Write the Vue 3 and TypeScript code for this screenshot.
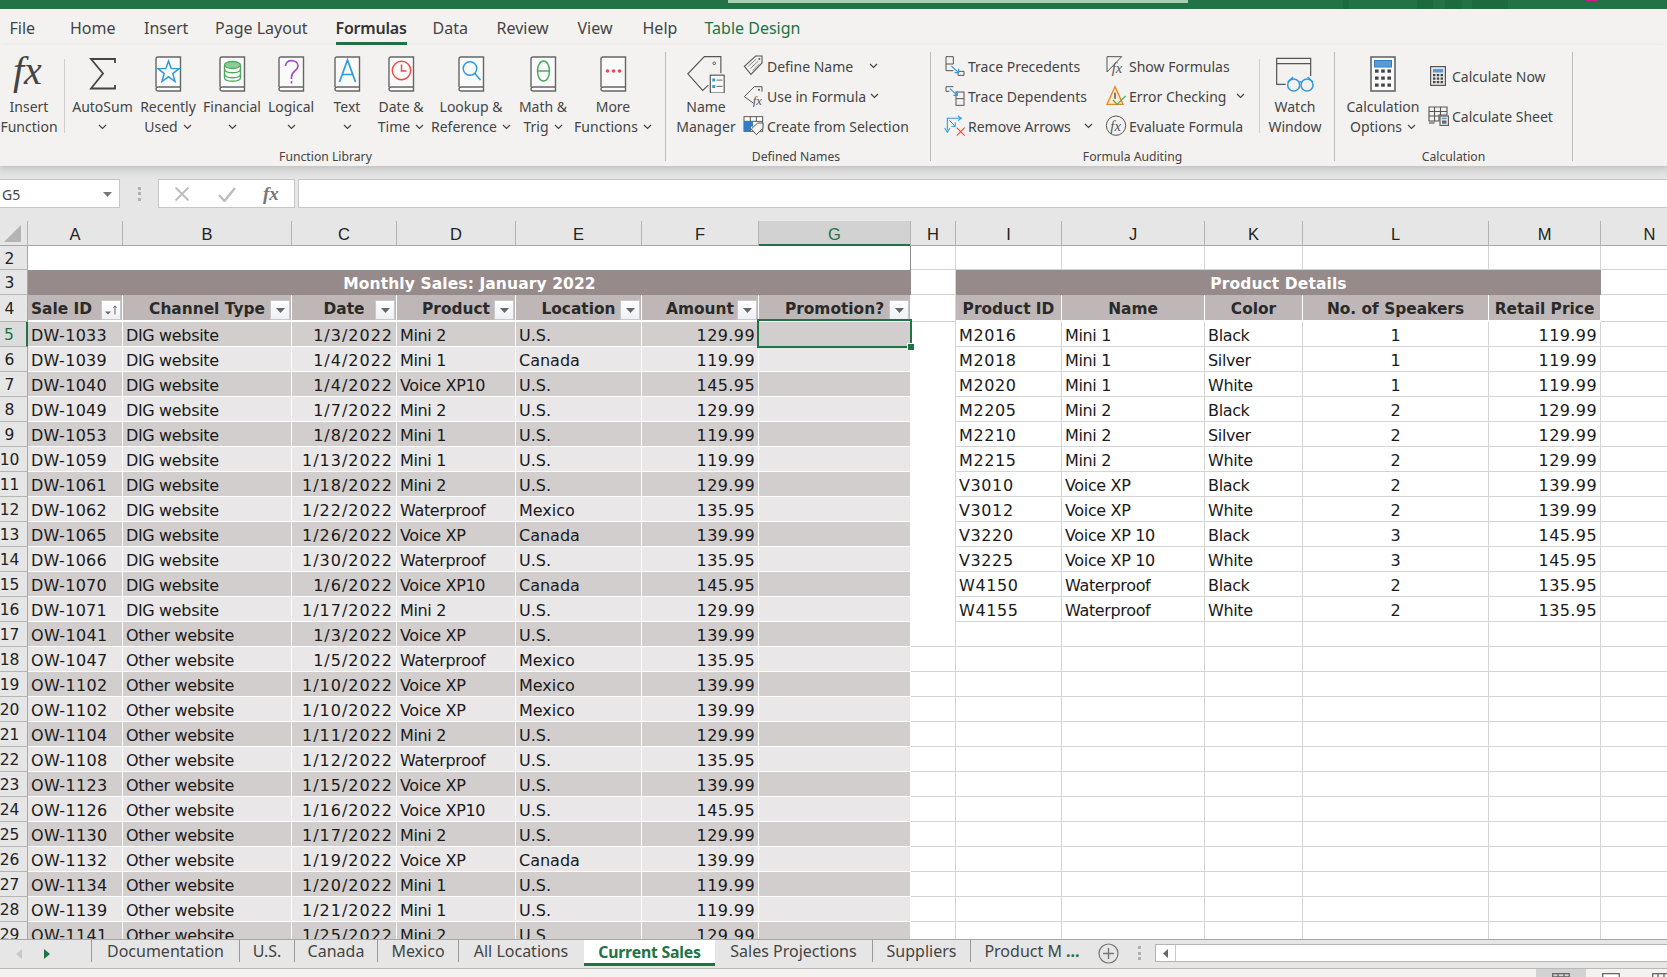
<script setup lang="ts">
interface Cell {
  text?: string
  cls: string
  filter?: boolean
  sorted?: boolean
  selected?: boolean
}
interface Row {
  n: number
  cls: string
  cells: Cell[]
}

const tabs = [
  { label: 'File', w: 60.5 },
  { label: 'Home', w: 74 },
  { label: 'Insert', w: 71 },
  { label: 'Page Layout', w: 120.5 },
  { label: 'Formulas', w: 97 },
  { label: 'Data', w: 64 },
  { label: 'Review', w: 81 },
  { label: 'View', w: 65 },
  { label: 'Help', w: 62 },
  { label: 'Table Design', w: 110 },
].map((t) => ({ ...t, active: t.label === 'Formulas', design: t.label === 'Table Design' }))

const library = [
  { key: 'recent', a: 'Recently', b: 'Used', w: 64 },
  { key: 'financial', a: 'Financial', b: '', w: 64 },
  { key: 'logical', a: 'Logical', b: '', w: 54 },
  { key: 'text', a: 'Text', b: '', w: 58 },
  { key: 'date', a: 'Date &', b: 'Time', w: 50 },
  { key: 'lookup', a: 'Lookup &', b: 'Reference', w: 90 },
  { key: 'math', a: 'Math &', b: 'Trig', w: 54 },
  { key: 'more', a: 'More', b: 'Functions', w: 86 },
]

const sheetTabs = [
  { label: 'Documentation', w: 149 },
  { label: 'U.S.', w: 55 },
  { label: 'Canada', w: 83 },
  { label: 'Mexico', w: 81 },
  { label: 'All Locations', w: 125 },
  { label: 'Current Sales', w: 131 },
  { label: 'Sales Projections', w: 158 },
  { label: 'Suppliers', w: 98 },
].map((t) => ({ ...t, active: t.label === 'Current Sales', plain: t.label === 'All Locations' }))

const columns = ['A', 'B', 'C', 'D', 'E', 'F', 'G', 'H', 'I', 'J', 'K', 'L', 'M', 'N']

const sales: string[][] = [
  ['DW-1033', 'DIG website', '1/3/2022', 'Mini 2', 'U.S.', '129.99'],
  ['DW-1039', 'DIG website', '1/4/2022', 'Mini 1', 'Canada', '119.99'],
  ['DW-1040', 'DIG website', '1/4/2022', 'Voice XP10', 'U.S.', '145.95'],
  ['DW-1049', 'DIG website', '1/7/2022', 'Mini 2', 'U.S.', '129.99'],
  ['DW-1053', 'DIG website', '1/8/2022', 'Mini 1', 'U.S.', '119.99'],
  ['DW-1059', 'DIG website', '1/13/2022', 'Mini 1', 'U.S.', '119.99'],
  ['DW-1061', 'DIG website', '1/18/2022', 'Mini 2', 'U.S.', '129.99'],
  ['DW-1062', 'DIG website', '1/22/2022', 'Waterproof', 'Mexico', '135.95'],
  ['DW-1065', 'DIG website', '1/26/2022', 'Voice XP', 'Canada', '139.99'],
  ['DW-1066', 'DIG website', '1/30/2022', 'Waterproof', 'U.S.', '135.95'],
  ['DW-1070', 'DIG website', '1/6/2022', 'Voice XP10', 'Canada', '145.95'],
  ['DW-1071', 'DIG website', '1/17/2022', 'Mini 2', 'U.S.', '129.99'],
  ['OW-1041', 'Other website', '1/3/2022', 'Voice XP', 'U.S.', '139.99'],
  ['OW-1047', 'Other website', '1/5/2022', 'Waterproof', 'Mexico', '135.95'],
  ['OW-1102', 'Other website', '1/10/2022', 'Voice XP', 'Mexico', '139.99'],
  ['OW-1102', 'Other website', '1/10/2022', 'Voice XP', 'Mexico', '139.99'],
  ['OW-1104', 'Other website', '1/11/2022', 'Mini 2', 'U.S.', '129.99'],
  ['OW-1108', 'Other website', '1/12/2022', 'Waterproof', 'U.S.', '135.95'],
  ['OW-1123', 'Other website', '1/15/2022', 'Voice XP', 'U.S.', '139.99'],
  ['OW-1126', 'Other website', '1/16/2022', 'Voice XP10', 'U.S.', '145.95'],
  ['OW-1130', 'Other website', '1/17/2022', 'Mini 2', 'U.S.', '129.99'],
  ['OW-1132', 'Other website', '1/19/2022', 'Voice XP', 'Canada', '139.99'],
  ['OW-1134', 'Other website', '1/20/2022', 'Mini 1', 'U.S.', '119.99'],
  ['OW-1139', 'Other website', '1/21/2022', 'Mini 1', 'U.S.', '119.99'],
  ['OW-1141', 'Other website', '1/25/2022', 'Mini 2', 'U.S.', '129.99'],
]

const products: string[][] = [
  ['M2016', 'Mini 1', 'Black', '1', '119.99'],
  ['M2018', 'Mini 1', 'Silver', '1', '119.99'],
  ['M2020', 'Mini 1', 'White', '1', '119.99'],
  ['M2205', 'Mini 2', 'Black', '2', '129.99'],
  ['M2210', 'Mini 2', 'Silver', '2', '129.99'],
  ['M2215', 'Mini 2', 'White', '2', '129.99'],
  ['V3010', 'Voice XP', 'Black', '2', '139.99'],
  ['V3012', 'Voice XP', 'White', '2', '139.99'],
  ['V3220', 'Voice XP 10', 'Black', '3', '145.95'],
  ['V3225', 'Voice XP 10', 'White', '3', '145.95'],
  ['W4150', 'Waterproof', 'Black', '2', '135.95'],
  ['W4155', 'Waterproof', 'White', '2', '135.95'],
]

const grid = (): Cell => ({ cls: 'grid' })

function buildRows(): Row[] {
  const out: Row[] = []
  out.push({
    n: 2,
    cls: 'r2',
    cells: [{ cls: 'merged-blank span7' }, grid(), grid(), grid(), grid(), grid(), grid(), grid()],
  })
  out.push({
    n: 3,
    cls: '',
    cells: [
      { cls: 'title span7', text: 'Monthly Sales: January 2022' },
      grid(),
      { cls: 'title span5', text: 'Product Details' },
      grid(),
    ],
  })
  const heads = ['Sale ID', 'Channel Type', 'Date', 'Product', 'Location', 'Amount', 'Promotion?']
  const heads2 = ['Product ID', 'Name', 'Color', 'No. of Speakers', 'Retail Price']
  out.push({
    n: 4,
    cls: 'r4',
    cells: [
      ...heads.map((h, i): Cell => ({
        text: h,
        cls: i === 0 ? 'head first' : 'head',
        filter: true,
        sorted: i === 0,
      })),
      grid(),
      ...heads2.map((h): Cell => ({ text: h, cls: 'head' })),
      grid(),
    ],
  })
  sales.forEach((s, i) => {
    const band = i % 2 === 0 ? 'band1' : 'band2'
    const right = products[i]
    const cells: Cell[] = [
      { text: s[0], cls: `${band} txt loose` },
      { text: s[1], cls: `${band} txt tight` },
      { text: s[2], cls: `${band} date` },
      { text: s[3], cls: `${band} txt tight` },
      { text: s[4], cls: `${band} txt` },
      { text: s[5], cls: `${band} amt` },
      { cls: `${band}`, selected: i === 0 },
    ]
    if (right) {
      cells.push(
        { cls: 'clear' },
        { text: right[0], cls: 'grid txt wide' },
        { text: right[1], cls: 'grid txt tight' },
        { text: right[2], cls: 'grid txt tight' },
        { text: right[3], cls: 'grid mid' },
        { text: right[4], cls: 'grid rgt' },
        grid(),
      )
    } else {
      for (let c = 0; c < 7; c++) cells.push(grid())
    }
    out.push({ n: i + 5, cls: '', cells })
  })
  return out
}

const rows = buildRows()
</script>

<template>
  <div class="app">
    <div class="titlebar"></div>

    <nav class="tabs">
      <div
        v-for="t in tabs"
        :key="t.label"
        class="tab"
        :class="{ active: t.active, design: t.design }"
        :style="{ width: t.w + 'px' }"
      >
        <span>{{ t.label }}</span>
      </div>
    </nav>

    <section class="ribbon">
      <!-- Function Library -->
      <div class="group g-library">
        <div class="group-body">
          <div class="big b-insert">
            <div class="slot"><svg class="fx-svg" width="36" height="42" viewBox="0 0 36 42"><text x="2" y="31" class="fx-big">fx</text></svg></div>
            <div class="lbl">Insert</div>
            <div class="lbl">Function</div>
          </div>
          <i class="sep short first-sep"></i>
          <div class="big b-autosum">
            <div class="slot">
              <svg width="28" height="32" viewBox="0 0 28 32"><path d="M26 5 V1 H2 L14 15.5 L2 30.5 H26 V27" fill="none" stroke="#444" stroke-width="1.8"/></svg>
            </div>
            <div class="lbl">AutoSum</div>
            <div class="lbl"><svg class="chev" viewBox="0 0 9 6"><path d="M1 1 L4.5 4.5 L8 1" /></svg></div>
          </div>
          <div v-for="f in library" :key="f.key" class="big" :style="{ width: f.w + 'px' }">
            <div class="slot">
              <svg width="27" height="36" viewBox="0 0 27 36">
                <path d="M1 31 V3 Q1 1 3 1 H25.5 V35 H3.5 Q1 35 1 33 Q1 31 3.5 31 H25.5" fill="#fafafa" stroke="#666" stroke-width="1.4"/>
                <g v-if="f.key === 'recent'" fill="none" stroke="#2e9ade" stroke-width="1.5">
                  <polygon points="13.5,5 16.2,12.5 24,12.6 17.8,17.6 20,25.5 13.5,20.8 7,25.5 9.2,17.6 3,12.6 10.8,12.5"/>
                </g>
                <g v-else-if="f.key === 'financial'" fill="none" stroke="#4ea95f" stroke-width="1.3">
                  <ellipse cx="13.5" cy="9" rx="8" ry="3.5" fill="#8fcb99"/>
                  <path d="M5.5 9 V13 C5.5 18 21.5 18 21.5 13 V9"/>
                  <path d="M5.5 13 V18 C5.5 23 21.5 23 21.5 18 V13"/>
                  <path d="M5.5 18 V21.5 C5.5 26.5 21.5 26.5 21.5 21.5 V18"/>
                </g>
                <g v-else-if="f.key === 'logical'" fill="none" stroke="#a94ec0" stroke-width="1.7">
                  <path d="M7.5 10 C7.5 2.5 20 3 20 10 C20 15 13.5 15 13.5 21 V23"/>
                  <path d="M13.5 25 V27.5"/>
                </g>
                <g v-else-if="f.key === 'text'" fill="none" stroke="#2e9ade" stroke-width="1.7">
                  <path d="M5.5 26 L13.5 4 L21.5 26 M8.2 18.5 H18.8"/>
                </g>
                <g v-else-if="f.key === 'date'" fill="none" stroke="#ef4b4b" stroke-width="1.5">
                  <circle cx="13.5" cy="14.5" r="9.2"/>
                  <path d="M13.5 8.5 V15 H18.5"/>
                </g>
                <g v-else-if="f.key === 'lookup'" fill="none" stroke="#2e9ade" stroke-width="1.5">
                  <circle cx="12" cy="12.5" r="6.8"/>
                  <path d="M16.8 17.5 L22.5 24"/>
                </g>
                <g v-else-if="f.key === 'math'" fill="none" stroke="#4ea95f" stroke-width="1.5">
                  <ellipse cx="13.5" cy="15" rx="6" ry="10"/>
                  <path d="M7.5 15 H19.5"/>
                </g>
                <g v-else fill="#ef4b4b">
                  <circle cx="7.5" cy="15" r="1.8"/><circle cx="13.5" cy="15" r="1.8"/><circle cx="19.5" cy="15" r="1.8"/>
                </g>
              </svg>
            </div>
            <div class="lbl">{{ f.a }}</div>
            <div class="lbl">{{ f.b }}<svg class="chev" :class="{ after: f.b }" viewBox="0 0 9 6"><path d="M1 1 L4.5 4.5 L8 1" /></svg></div>
          </div>
        </div>
        <div class="group-label">Function Library</div>
      </div>
      <i class="sep"></i>

      <!-- Defined Names -->
      <div class="group g-names">
        <div class="group-body">
          <div class="big b-name">
            <div class="slot">
              <svg width="40" height="37" viewBox="55 18 120 112">
                <path d="M160 70 V20 H110 L60 72 L105 122 L122 106" fill="none" stroke="#555" stroke-width="3.5"/>
                <circle cx="140" cy="40" r="4" fill="none" stroke="#555" stroke-width="3"/>
                <rect x="128" y="76" width="42" height="54" fill="#fafafa" stroke="#555" stroke-width="3.5"/>
                <rect x="134" y="86" width="9" height="9" fill="#2e9ade"/><rect x="134" y="106" width="9" height="9" fill="#2e9ade"/>
                <path d="M147 91 H165 M147 110 H165" stroke="#666" stroke-width="3"/>
              </svg>
            </div>
            <div class="lbl">Name</div>
            <div class="lbl">Manager</div>
          </div>
          <div class="col c-names">
            <div class="small">
              <span class="ico"><svg width="22" height="22" viewBox="218 14 66 66">
                <path d="M222 48 L256 17 H275 V38 L242 72 Z" fill="none" stroke="#555" stroke-width="3.2"/>
                <path d="M234 48 L258 26 M240 55 L264 32 M247 61 L268 40" stroke="#777" stroke-width="2.6"/>
                <circle cx="267" cy="26" r="3" fill="#555"/>
              </svg></span>
              <span class="stxt fixed" :style="{ width: '102px' }">Define Name</span>
              <svg class="chev" viewBox="0 0 9 6"><path d="M1 1 L4.5 4.5 L8 1" /></svg>
            </div>
            <div class="small">
              <span class="ico"><svg width="22" height="22" viewBox="218 105 66 66">
                <path d="M250 160 L222 140 L252 110 H275 V125" fill="none" stroke="#555" stroke-width="3"/>
                <circle cx="266" cy="119" r="3" fill="#555"/>
                <text x="247" y="165" class="fx-s">fx</text>
              </svg></span>
              <span class="stxt fixed" :style="{ width: '103px' }">Use in Formula</span>
              <svg class="chev" viewBox="0 0 9 6"><path d="M1 1 L4.5 4.5 L8 1" /></svg>
            </div>
            <div class="small">
              <span class="ico"><svg width="22" height="22" viewBox="218 198 66 66">
                <rect x="221" y="203" width="56" height="44" fill="#fff" stroke="#555" stroke-width="3"/>
                <path d="M221 217 H277 M221 231 H248 M240 203 V247 M258 203 V217" stroke="#555" stroke-width="3"/>
                <rect x="221" y="217" width="19" height="30" fill="#2e7fc8"/>
                <rect x="240" y="217" width="8" height="14" fill="#2e7fc8"/>
                <path d="M243 240 L262 222 H278 V238 L258 257 Z" fill="#f5f4f3" stroke="#555" stroke-width="3"/>
              </svg></span>
              <span class="stxt">Create from Selection</span>
            </div>
          </div>
        </div>
        <div class="group-label">Defined Names</div>
      </div>
      <i class="sep"></i>

      <!-- Formula Auditing -->
      <div class="group g-audit">
        <div class="group-body">
          <div class="col c-a1">
            <div class="small">
              <span class="ico"><svg width="22" height="22" viewBox="820 15 66 66">
                <path d="M826 20 H848 V42 H826 Z M826 42 V62 H848" fill="none" stroke="#555" stroke-width="3"/>
                <path d="M862 64 H880 V76 H862 Z" fill="none" stroke="#555" stroke-width="3"/>
                <path d="M842 48 L864 68 M864 56 V68 H852" fill="none" stroke="#2e9ade" stroke-width="3.4"/>
              </svg></span>
              <span class="stxt">Trace Precedents</span>
            </div>
            <div class="small">
              <span class="ico"><svg width="22" height="22" viewBox="820 105 66 66">
                <path d="M848 110 H826 V124 H836" fill="none" stroke="#555" stroke-width="3"/>
                <rect x="856" y="126" width="24" height="40" fill="none" stroke="#555" stroke-width="3"/>
                <path d="M856 146 H880" stroke="#555" stroke-width="3"/>
                <path d="M838 116 L860 136 M860 124 V136 H848" fill="none" stroke="#2e9ade" stroke-width="3.4"/>
              </svg></span>
              <span class="stxt">Trace Dependents</span>
            </div>
            <div class="small">
              <span class="ico"><svg width="22" height="22" viewBox="820 198 66 66">
                <path d="M830 244 V208 H868 M862 201 L872 208 L862 215 M822 237 L830 250 L838 237" fill="none" stroke="#2e9ade" stroke-width="3.2"/>
                <path d="M836 214 L854 232 M854 220 V232 H842" fill="none" stroke="#2e9ade" stroke-width="3"/>
                <path d="M858 236 L882 260 M882 236 L858 260" stroke="#e8473f" stroke-width="3.2"/>
              </svg></span>
              <span class="stxt fixed" :style="{ width: '116px' }">Remove Arrows</span>
              <svg class="chev" viewBox="0 0 9 6"><path d="M1 1 L4.5 4.5 L8 1" /></svg>
            </div>
          </div>
          <div class="col c-a2">
            <div class="small">
              <span class="ico"><svg width="22" height="22" viewBox="42 15 66 66">
                <path d="M48 20 H92 L48 66 Z" fill="none" stroke="#555" stroke-width="3"/>
                <text x="62" y="68" class="fx-m">fx</text>
              </svg></span>
              <span class="stxt">Show Formulas</span>
            </div>
            <div class="small">
              <span class="ico"><svg width="22" height="22" viewBox="42 105 66 66">
                <path d="M72 110 L48 163 H96 Z" fill="#fbe9d0" stroke="#e8861e" stroke-width="4"/>
                <path d="M72 128 V146" stroke="#444" stroke-width="4"/>
                <path d="M66 150 L78 163 L104 138" fill="none" stroke="#4ea95f" stroke-width="3.5"/>
              </svg></span>
              <span class="stxt fixed" :style="{ width: '107px' }">Error Checking</span>
              <svg class="chev" viewBox="0 0 9 6"><path d="M1 1 L4.5 4.5 L8 1" /></svg>
            </div>
            <div class="small">
              <span class="ico"><svg width="22" height="22" viewBox="42 198 66 66">
                <circle cx="75" cy="230" r="29" fill="none" stroke="#555" stroke-width="3"/>
                <text x="58" y="245" class="fx-m">fx</text>
              </svg></span>
              <span class="stxt">Evaluate Formula</span>
            </div>
          </div>
          <i class="sep short"></i>
          <div class="big b-watch">
            <div class="slot">
              <svg width="42" height="37" viewBox="555 25 126 111">
                <path d="M590 110 H563 V32 H665 V85" fill="none" stroke="#555" stroke-width="3.6"/>
                <path d="M563 48 H665" stroke="#555" stroke-width="3.6"/>
                <g fill="none" stroke="#2e9ade" stroke-width="4.4">
                  <circle cx="614" cy="112" r="18"/><circle cx="654" cy="112" r="18"/>
                  <path d="M596 104 L612 88 M672 104 L656 88 M630 104 Q634 100 638 104"/>
                </g>
              </svg>
            </div>
            <div class="lbl">Watch</div>
            <div class="lbl">Window</div>
          </div>
        </div>
        <div class="group-label">Formula Auditing</div>
      </div>
      <i class="sep"></i>

      <!-- Calculation -->
      <div class="group g-calc">
        <div class="group-body">
          <div class="big b-options">
            <div class="slot">
              <svg width="26" height="36" viewBox="0 0 26 36">
                <rect x="1" y="1" width="24" height="34" fill="#fafafa" stroke="#666" stroke-width="1.6"/>
                <rect x="4.5" y="4.5" width="17" height="6.5" fill="#5b9bd5" stroke="#2e7fc8"/>
                <g fill="#444">
                  <rect x="5" y="13.5" width="3.6" height="3.2"/><rect x="11.2" y="13.5" width="3.6" height="3.2"/><rect x="17.4" y="13.5" width="3.6" height="3.2"/>
                  <rect x="5" y="20.5" width="3.6" height="3.2"/><rect x="11.2" y="20.5" width="3.6" height="3.2"/><rect x="17.4" y="20.5" width="3.6" height="3.2"/>
                  <rect x="5" y="27.5" width="3.6" height="3.2"/><rect x="11.2" y="27.5" width="3.6" height="3.2"/><rect x="17.4" y="27.5" width="3.6" height="3.2"/>
                </g>
              </svg>
            </div>
            <div class="lbl">Calculation</div>
            <div class="lbl">Options<svg class="chev after" viewBox="0 0 9 6"><path d="M1 1 L4.5 4.5 L8 1" /></svg></div>
          </div>
          <div class="col c-calc">
            <div class="small tall">
              <span class="ico"><svg width="16" height="20" viewBox="0 0 16 20">
                <rect x=".6" y=".6" width="14.8" height="18.8" fill="#e8e8e8" stroke="#555" stroke-width="1.2"/>
                <rect x="3" y="3" width="10" height="3.5" fill="#5b9bd5"/>
                <g fill="#444">
                  <rect x="3" y="8" width="2.4" height="2.2"/><rect x="6.8" y="8" width="2.4" height="2.2"/><rect x="10.6" y="8" width="2.4" height="2.2"/>
                  <rect x="3" y="11.5" width="2.4" height="2.2"/><rect x="6.8" y="11.5" width="2.4" height="2.2"/><rect x="10.6" y="11.5" width="2.4" height="2.2"/>
                  <rect x="3" y="15" width="2.4" height="2.2"/><rect x="6.8" y="15" width="2.4" height="2.2"/><rect x="10.6" y="15" width="2.4" height="2.2"/>
                </g>
              </svg></span>
              <span class="stxt">Calculate Now</span>
            </div>
            <div class="small tall">
              <span class="ico"><svg width="21" height="20" viewBox="0 0 21 20">
                <path d="M1 1 H19 V9 H11 V15 H1 Z M1 5.5 H19 M1 10 H11 M6.5 1 V15 M12.5 1 V9" fill="none" stroke="#555" stroke-width="1.1"/>
                <path d="M1 15 H8 L6 18 H1 Z" fill="#999"/>
                <rect x="12" y="10" width="8.4" height="9.4" fill="#eee" stroke="#555" stroke-width="1.1"/>
                <rect x="13.8" y="11.6" width="4.8" height="1.6" fill="#5b9bd5"/>
                <rect x="14" y="14.5" width="4.5" height="3.2" fill="#666"/>
              </svg></span>
              <span class="stxt">Calculate Sheet</span>
            </div>
          </div>
        </div>
        <div class="group-label">Calculation</div>
      </div>
      <i class="sep"></i>
    </section>

    <section class="fbar">
      <div class="namebox">
        <span>G5</span>
        <svg width="9" height="5" viewBox="0 0 9 5"><path d="M0 0 H9 L4.5 5 Z" fill="#777"/></svg>
      </div>
      <div class="grip"><i></i><i></i><i></i></div>
      <div class="fbtns">
        <svg width="16" height="16" viewBox="0 0 16 16"><path d="M1.5 1.5 L14.5 14.5 M14.5 1.5 L1.5 14.5" stroke="#bcbcbc" stroke-width="1.8"/></svg>
        <svg width="18" height="16" viewBox="0 0 18 16"><path d="M1 9 L6.5 15 L17 2" fill="none" stroke="#bcbcbc" stroke-width="2.4"/></svg>
        <span class="fbtn-fx">fx</span>
      </div>
      <div class="finput"></div>
    </section>

    <section class="sheet">
      <div class="row colhead">
        <div class="corner"><svg width="17" height="17" viewBox="0 0 17 17"><path d="M17 0 V17 H0 Z" fill="#b4b4b4"/></svg></div>
        <div v-for="c in columns" :key="c" class="ch" :class="{ on: c === 'G' }">{{ c }}</div>
      </div>
      <div v-for="r in rows" :key="r.n" class="row" :class="r.cls">
        <div class="rh" :class="{ on: r.n === 5 }"><span>{{ r.n }}</span></div>
        <div
          v-for="(c, i) in r.cells"
          :key="i"
          class="cell"
          :class="[c.cls, { 'has-sel': c.selected }]"
        >
          <span v-if="c.text" class="t">{{ c.text }}</span>
          <span v-if="c.filter" class="filter">
            <svg v-if="c.sorted" width="14" height="10" viewBox="0 0 14 10"><path d="M1 6.5 H7 L4 9.5 Z" fill="#666"/><path d="M11 9.5 V1 M9.4 2.8 L11 .8 L12.6 2.8" fill="none" stroke="#666" stroke-width="1"/></svg>
            <svg v-else width="9" height="5" viewBox="0 0 9 5"><path d="M0 0 H9 L4.5 5 Z" fill="#666"/></svg>
          </span>
          <span v-if="c.selected" class="selbox"><i class="handle"></i></span>
        </div>
      </div>
    </section>

    <section class="sheetbar">
      <div class="nav">
        <svg width="6" height="10" viewBox="0 0 6 10"><path d="M6 0 V10 L0 5 Z" fill="#c8c8c8"/></svg>
        <svg width="6" height="10" viewBox="0 0 6 10"><path d="M0 0 V10 L6 5 Z" fill="#217346"/></svg>
      </div>
      <div v-for="t in sheetTabs" :key="t.label" class="stab" :class="{ active: t.active, nosep: t.plain }" :style="{ width: t.w + 'px' }">{{ t.label }}</div>
      <div class="stab last">Product M&nbsp;<span class="more">...</span></div>
      <svg class="plus" width="21" height="21" viewBox="0 0 21 21"><circle cx="10.5" cy="10.5" r="9.5" fill="none" stroke="#777" stroke-width="1.2"/><path d="M10.5 5 V16 M5 10.5 H16" stroke="#777" stroke-width="1.4"/></svg>
      <div class="grip small-grip"><i></i><i></i><i></i></div>
      <div class="hscroll">
        <div class="hbtn"><svg width="5" height="9" viewBox="0 0 5 9"><path d="M5 0 V9 L0 4.5 Z" fill="#666"/></svg></div>
      </div>
    </section>

    <footer class="status">
      <div class="view on"><svg width="18" height="8" viewBox="0 0 18 8"><path d="M.7 8 V.7 H17.3 V8 M6 0 V8 M12 0 V8 M0 4 H18" fill="none" stroke="#666" stroke-width="1.3"/></svg></div>
      <div class="view"><svg width="18" height="8" viewBox="0 0 18 8"><path d="M.7 8 V.7 H17.3 V8" fill="#fff" stroke="#666" stroke-width="1.3"/></svg></div>
      <div class="view"><svg width="18" height="8" viewBox="0 0 18 8"><path d="M.7 8 V.7 H17.3 V8 M6 0 V8 M12 0 V8" fill="none" stroke="#666" stroke-width="1.3"/></svg></div>
    </footer>
  </div>
</template>

<style scoped>
.app {
  width: 1667px;
  height: 977px;
  overflow: hidden;
  display: flex;
  flex-direction: column;
  background: #e6e6e6;
  font-family: "Noto Sans", "Liberation Sans", sans-serif;
  color: #444;
}
.titlebar {
  height: 9px;
  flex: none;
  background:
    linear-gradient(#a9cfb7, #a9cfb7) 728px 0 / 460px 3px no-repeat,
    linear-gradient(#d6188e, #d6188e) 1586px 0 / 12px 1px no-repeat,
    linear-gradient(#1d6a3f, #1d6a3f) 1343px 0 / 6px 9px no-repeat,
    linear-gradient(#1d6a3f, #1d6a3f) 1417px 0 / 16px 9px no-repeat,
    linear-gradient(#1d6a3f, #1d6a3f) 1445px 0 / 17px 9px no-repeat,
    linear-gradient(#1d6a3f, #1d6a3f) 1472px 0 / 36px 9px no-repeat,
    #217346;
}
.tabs {
  flex: none;
  height: 36px;
  display: flex;
  padding-left: 9.5px;
  background: #f3f2f1;
  font-size: 16px;
  line-height: 38px;
}
.tab {
  flex: none;
  white-space: nowrap;
}
.tab span {
  display: inline-block;
  height: 36px;
}
.tab.active span {
  font-weight: 600;
  color: #333;
  border-bottom: 3px solid #217346;
  box-sizing: border-box;
  letter-spacing: -.2px;
}
.tab.design {
  color: #217346;
}
.ribbon {
  flex: none;
  height: 121px;
  display: flex;
  background: #f3f2f1;
  font-size: 14px;
  box-shadow: 0 2px 6px rgba(0, 0, 0, .12);
  position: relative;
  z-index: 2;
}
.sep {
  flex: none;
  display: block;
  width: 1px;
  height: 109px;
  margin-top: 7px;
  background: #bdbcbb;
}
.sep.short {
  height: 74px;
  margin-top: 14px;
  background: #d0cfce;
}
.group {
  flex: none;
  display: flex;
  flex-direction: column;
}
.group-body {
  flex: 1;
  display: flex;
  min-height: 0;
}
.group-label {
  flex: none;
  height: 20px;
  line-height: 22px;
  text-align: center;
  font-size: 12.2px;
}
.g-library { width: 665px; }
.g-library .group-label { padding-right: 14px; }
.g-names { width: 264px; }
.g-names .group-label { padding-right: 4px; }
.g-audit { width: 403px; }
.g-calc { width: 237px; }
.big {
  flex: none;
  display: flex;
  flex-direction: column;
  align-items: center;
  padding-top: 11px;
  white-space: nowrap;
}
.slot {
  height: 36px;
  margin-bottom: 5px;
  display: flex;
  align-items: center;
  justify-content: center;
}
.lbl {
  height: 20px;
  line-height: 20px;
  display: flex;
  align-items: center;
}
.fx-svg {
  overflow: visible;
}
.b-insert { width: 58px; }
.first-sep { margin-left: 6px; margin-right: 3px; }
.b-autosum { width: 68px; padding-left: 1px; box-sizing: border-box; }
.fx-big {
  font-family: "Liberation Serif", serif;
  font-style: italic;
  font-size: 40px;
  fill: #444;
}
.fx-s {
  font-family: "Liberation Serif", serif;
  font-style: italic;
  font-size: 38px;
  fill: #555;
}
.fx-m {
  font-family: "Liberation Serif", serif;
  font-style: italic;
  font-size: 44px;
  fill: #555;
}
.chev {
  width: 9px;
  height: 6px;
  flex: none;
  fill: none;
  stroke: #444;
  stroke-width: 1.2;
}
.chev.after {
  margin-left: 5px;
}
.col {
  flex: none;
  display: flex;
  flex-direction: column;
  padding-top: 6px;
}
.small {
  height: 30px;
  display: flex;
  align-items: center;
  white-space: nowrap;
}
.small.tall {
  height: 40px;
}
.ico {
  flex: none;
  width: 22px;
  margin-right: 2px;
  display: flex;
  justify-content: center;
}
.stxt.fixed {
  flex: none;
}
.b-name { width: 72px; margin-left: 4px; }
.c-names { margin-left: 1px; }
.c-a1 { width: 161px; margin-left: 13px; }
.c-a2 { width: 154px; }
.b-watch { width: 70px; }
.g-calc .b-options { width: 76px; margin-left: 10px; }
.c-calc { margin-left: 5px; padding-top: 11px; }
.c-calc .ico { width: 24px; }
.fbar {
  flex: none;
  height: 55px;
  box-sizing: border-box;
  padding: 13px 0;
  display: flex;
  background: linear-gradient(#d9d9d9, #e6e6e6 13px);
}
.namebox {
  width: 120px;
  box-sizing: border-box;
  border: 1px solid #c6c6c6;
  border-left: 0;
  background: #fff;
  display: flex;
  align-items: center;
  justify-content: space-between;
  padding: 2px 7px 0 2px;
  font-size: 14px;
}
.grip {
  width: 38px;
  display: flex;
  flex-direction: column;
  align-items: center;
  justify-content: center;
  gap: 2.5px;
}
.grip i {
  width: 3px;
  height: 3px;
  background: #b0b0b0;
}
.fbtns {
  width: 137px;
  box-sizing: border-box;
  border: 1px solid #c6c6c6;
  background: #fff;
  display: flex;
  align-items: center;
  padding-left: 15px;
  gap: 28px;
}
.fbtn-fx {
  font-family: "Liberation Serif", serif;
  font-style: italic;
  font-weight: 700;
  font-size: 19px;
  color: #777;
  margin-left: -1px;
}
.finput {
  flex: 1;
  margin-left: 3px;
  box-sizing: border-box;
  border: 1px solid #c6c6c6;
  border-right: 0;
  background: #fff;
}
.sheet {
  flex: 1;
  min-height: 0;
  overflow: hidden;
  background: #fff;
  font-family: "DejaVu Sans", "Liberation Sans", sans-serif;
  font-size: 16px;
  color: #1a1a1a;
}
.row {
  display: grid;
  grid-template-columns: 28px 95px 169px 105px 119px 126px 117px 152px 45px 106px 143px 98px 186px 112px 98px;
  height: 25px;
  width: 1699px;
}
.row.r2 { height: 24px; }
.row.r4 { height: 27px; }
.colhead {
  height: 25px;
  background: #e6e6e6;
  border-bottom: 1px solid #a8a8a8;
  box-sizing: border-box;
}
.corner {
  display: flex;
  align-items: flex-end;
  justify-content: center;
  padding: 0 3px 3px 0;
  box-sizing: border-box;
  border-right: 1px solid #b5b5b5;
}
.ch {
  display: flex;
  align-items: center;
  justify-content: center;
  border-right: 1px solid #b5b5b5;
  font-family: "Liberation Sans", sans-serif;
  font-size: 16.5px;
  color: #222;
  padding-top: 2px;
}
.ch.on {
  background: #d2d2d2;
  color: #217346;
  box-shadow: inset 0 -2px 0 #217346;
  margin-bottom: -1px;
}
.rh {
  background: #e6e6e6;
  border-right: 1px solid #a8a8a8;
  border-bottom: 1px solid #b5b5b5;
  box-sizing: border-box;
  display: flex;
  align-items: center;
  justify-content: center;
  padding: 2px 8px 0 0;
  font-size: 15.5px;
  white-space: nowrap;
  color: #222;
}
.rh.on {
  color: #217346;
  background: #dcdcdc;
  border-right: 2px solid #217346;
}
.cell {
  position: relative;
  display: flex;
  align-items: center;
  min-width: 0;
  white-space: nowrap;
  overflow: hidden;
  box-sizing: border-box;
  padding-top: 2px;
}
.span7 { grid-column: span 7; }
.span5 { grid-column: span 5; }
.grid {
  border-right: 1px solid #d4d4d4;
  border-bottom: 1px solid #d4d4d4;
}
.clear {
  border-right: 1px solid #d4d4d4;
}
.merged-blank {
  border-right: 1px solid #8c8c8c;
}
.title {
  background: #968b8a;
  color: #fff;
  font-weight: 700;
  font-size: 15.5px;
  justify-content: center;
  letter-spacing: .1px;
}
.head {
  background: #bfb7b7;
  border-right: 1px solid #fff;
  border-bottom: 2px solid #fff;
  justify-content: center;
  font-weight: 700;
  font-size: 15.4px;
  color: #2a2a2a;
}
.head.first {
  justify-content: flex-start;
  padding-left: 3px;
}
.band1 {
  background: #d2cece;
  border-right: 1px solid #fff;
  border-bottom: 1px solid #fff;
}
.band2 {
  background: #e9e7e8;
  border-right: 1px solid #fff;
  border-bottom: 1px solid #fff;
}
.txt { padding-left: 3px; }
.tight { letter-spacing: -.35px; }
.loose { letter-spacing: .3px; }
.wide .t { letter-spacing: .6px; }
.date {
  justify-content: flex-end;
  padding-right: 3px;
  letter-spacing: 1px;
}
.amt {
  justify-content: flex-end;
  padding-right: 3px;
  letter-spacing: .4px;
}
.mid { justify-content: center; }
.rgt {
  justify-content: flex-end;
  padding-right: 3px;
  letter-spacing: .4px;
}
.filter {
  position: absolute;
  right: 1px;
  bottom: 0;
  width: 20px;
  height: 20px;
  box-sizing: border-box;
  background: linear-gradient(#fff, #eef0f6);
  border: 1px solid #c8c8c8;
  display: flex;
  align-items: center;
  justify-content: center;
}
.has-sel {
  overflow: visible;
}
.selbox {
  position: absolute;
  left: -2px;
  top: -3px;
  right: -2px;
  bottom: -2px;
  border: 2.5px solid #217346;
  z-index: 5;
  box-sizing: border-box;
}
.handle {
  position: absolute;
  right: -4px;
  bottom: -4px;
  width: 6px;
  height: 6px;
  background: #217346;
  border: 1px solid #fff;
  border-width: 1px 0 0 1px;
}
.sheetbar {
  flex: none;
  height: 30px;
  box-sizing: border-box;
  display: flex;
  align-items: flex-start;
  background: #e6e6e6;
  border-top: 1px solid #a6a6a6;
  border-bottom: 1px solid #b8b8b8;
  font-size: 16px;
  position: relative;
  z-index: 3;
}
.nav {
  flex: none;
  width: 91px;
  height: 28px;
  box-sizing: border-box;
  display: flex;
  align-items: center;
  gap: 22px;
  padding-left: 16px;
}
.stab {
  flex: none;
  height: 22px;
  margin-top: 0;
  border-right: 1px solid #999;
  display: flex;
  align-items: center;
  justify-content: center;
  white-space: nowrap;
  box-sizing: border-box;
}
.nav + .stab {
  border-left: 1px solid #999;
}
.stab.nosep {
  border-right-color: transparent;
}
.stab.active {
  height: 26px;
  background: #fff;
  color: #217346;
  font-weight: 700;
  font-size: 15.8px;
  border-right: 0;
  border-bottom: 3px solid #217346;
  letter-spacing: -.2px;
}
.stab.last {
  width: 122px;
  border-right: 0;
}
.more {
  color: #217346;
  font-weight: 700;
}
.plus {
  flex: none;
  margin: 3px 0 0 5px;
}
.small-grip {
  width: 50px;
  height: 26px;
  margin-left: -5px;
}
.hscroll {
  flex: 1;
  height: 18px;
  margin-top: 4px;
  margin-left: -9px;
  box-sizing: border-box;
  border: 1px solid #b4b4b4;
  border-right: 0;
  background: #fff;
  display: flex;
}
.hbtn {
  width: 19px;
  border-right: 1px solid #c8c8c8;
  display: flex;
  align-items: center;
  justify-content: center;
}
.status {
  flex: none;
  height: 8px;
  background: #f3f2f1;
  display: flex;
  justify-content: flex-end;
  overflow: hidden;
  padding-right: 0;
}
.view {
  width: 50px;
  height: 8px;
  box-sizing: border-box;
  padding-top: 4px;
  display: flex;
  justify-content: center;
  overflow: hidden;
}
.view:last-child {
  margin-right: -19px;
}
.view.on {
  background: #d2d2d2;
}
</style>

<style>
html, body {
  margin: 0;
  background: #e6e6e6;
}
</style>
